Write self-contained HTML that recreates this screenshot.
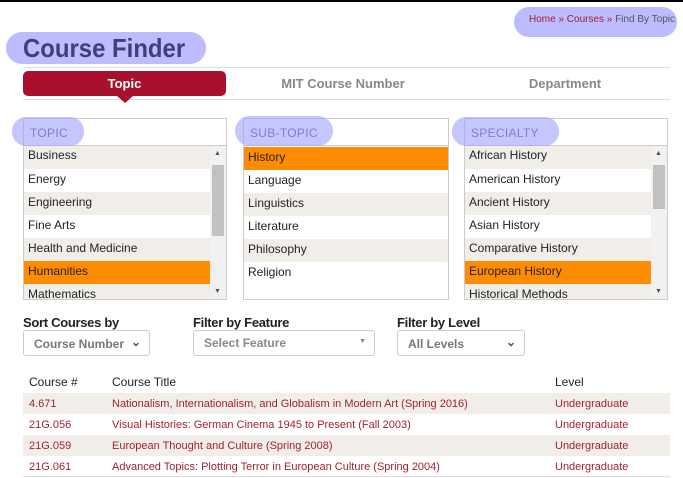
<!DOCTYPE html>
<html><head><style>
*{margin:0;padding:0;box-sizing:border-box}
body{width:683px;height:478px;background:#fff;font-family:"Liberation Sans",sans-serif;position:relative;overflow:hidden}
.a{position:absolute}
.blob{position:absolute;background:rgba(160,160,255,.7);border-radius:16px}
.box{position:absolute;top:118px;height:182px;border:1px solid #ccc;background:#fff;overflow:hidden}
.hd{height:27px;border-bottom:1px solid #ccc;font-size:12px;color:#4a4a8a;padding:7px 0 0 6px;letter-spacing:.3px}
.row{height:23px;font-size:12px;color:#222;padding:3px 0 0 4px}
.g{background:#f1eeea}.o{background:#ff8c00}
.sb{position:absolute;right:0;top:27px;width:16px;bottom:0;background:#f1f1f1}
.th{position:absolute;left:2px;width:12px;background:#c1c1c1}
.lab{position:absolute;top:315px;font-size:13px;color:#222;font-weight:bold;letter-spacing:-.3px}
.sel{position:absolute;top:330px;height:26px;border:1px solid #ccc;border-radius:3px;font-size:12px;color:#777;padding:6px 0 0 10px;font-weight:bold}
.tr{position:absolute;left:23px;width:647px;height:21px;font-size:11px;color:#a31f34}
.tr span{position:absolute;top:5px}
</style></head><body>
<div class="a" style="left:0;top:0;width:683px;height:2px;background:#000"></div>
<div class="blob" style="left:514px;top:7px;width:163px;height:30px;border-radius:15px"></div>
<div class="a" style="left:529px;top:14px;font-size:10px;color:#a31f34">Home » Courses » <span style="color:#555">Find By Topic</span></div>
<div class="blob" style="left:6px;top:32px;width:200px;height:32px"></div>
<div class="a" style="left:23px;top:33px;font-size:26px;font-weight:bold;color:#3f3f7a;transform:scaleX(.92);transform-origin:left top">Course Finder</div>
<div class="a" style="left:23px;top:67px;width:647px;height:1px;background:#ddd"></div>
<div class="a" style="left:23px;top:99px;width:647px;height:1px;background:#ddd"></div>
<div class="a" style="left:23px;top:71px;width:203px;height:25px;background:#a8102e;border-radius:5px;color:#fff;font-weight:bold;font-size:13px;text-align:center;line-height:25px">Topic</div>
<div class="a" style="left:117px;top:96px;border-left:8px solid transparent;border-right:8px solid transparent;border-top:7px solid #a8102e"></div>
<div class="a" style="left:226px;top:76px;width:234px;text-align:center;font-size:13px;font-weight:bold;color:#888">MIT Course Number</div>
<div class="a" style="left:460px;top:76px;width:210px;text-align:center;font-size:13px;font-weight:bold;color:#888">Department</div>

<div class="box" style="left:23px;width:204px">
<div class="hd">TOPIC</div>
<div class="row g" style="padding-top:2px">Business</div><div class="row">Energy</div><div class="row g">Engineering</div><div class="row">Fine Arts</div><div class="row g">Health and Medicine</div><div class="row o">Humanities</div><div class="row g">Mathematics</div>
<div class="sb"><div class="th" style="top:19px;height:71px"></div><div class="a" style="left:4px;top:4px;font-size:7px;color:#555">▲</div><div class="a" style="left:4px;bottom:4px;font-size:7px;color:#555">▼</div></div>
</div>
<div class="box" style="left:243px;width:206px">
<div class="hd">SUB-TOPIC</div>
<div class="row o" style="margin-top:1px">History</div><div class="row">Language</div><div class="row g">Linguistics</div><div class="row">Literature</div><div class="row g">Philosophy</div><div class="row">Religion</div>
</div>
<div class="box" style="left:464px;width:204px">
<div class="hd">SPECIALTY</div>
<div class="row g" style="padding-top:2px">African History</div><div class="row">American History</div><div class="row g">Ancient History</div><div class="row">Asian History</div><div class="row g">Comparative History</div><div class="row o">European History</div><div class="row g">Historical Methods</div>
<div class="sb"><div class="th" style="top:19px;height:44px"></div><div class="a" style="left:4px;top:4px;font-size:7px;color:#555">▲</div><div class="a" style="left:4px;bottom:4px;font-size:7px;color:#555">▼</div></div>
</div>
<div class="blob" style="left:12px;top:117px;width:72px;height:29px;border-radius:14px;opacity:.85"></div>
<div class="blob" style="left:235px;top:116px;width:98px;height:30px;border-radius:15px;opacity:.85"></div>
<div class="blob" style="left:452px;top:117px;width:107px;height:29px;border-radius:14px;opacity:.85"></div>

<div class="lab" style="left:23px">Sort Courses by</div>
<div class="lab" style="left:193px">Filter by Feature</div>
<div class="lab" style="left:397px">Filter by Level</div>
<div class="sel" style="left:23px;width:127px">Course Number<span class="a" style="right:8px;top:4px;color:#555">⌄</span></div>
<div class="sel" style="left:193px;width:182px;padding-top:5px;color:#888">Select Feature<span class="a" style="right:8px;top:7px;font-size:7px">▼</span></div>
<div class="sel" style="left:397px;width:128px">All Levels<span class="a" style="right:8px;top:4px;color:#555">⌄</span></div>

<div class="a" style="left:29px;top:375px;font-size:12px;color:#222">Course #</div>
<div class="a" style="left:112px;top:375px;font-size:12px;color:#222">Course Title</div>
<div class="a" style="left:555px;top:375px;font-size:12px;color:#222">Level</div>
<div class="tr g" style="top:393px"><span style="left:6px">4.671</span><span style="left:89px">Nationalism, Internationalism, and Globalism in Modern Art (Spring 2016)</span><span style="left:532px">Undergraduate</span></div>
<div class="tr" style="top:414px"><span style="left:6px">21G.056</span><span style="left:89px">Visual Histories: German Cinema 1945 to Present (Fall 2003)</span><span style="left:532px">Undergraduate</span></div>
<div class="tr g" style="top:435px"><span style="left:6px">21G.059</span><span style="left:89px">European Thought and Culture (Spring 2008)</span><span style="left:532px">Undergraduate</span></div>
<div class="tr" style="top:456px;border-bottom:1px solid #ddd"><span style="left:6px">21G.061</span><span style="left:89px">Advanced Topics: Plotting Terror in European Culture (Spring 2004)</span><span style="left:532px">Undergraduate</span></div>
</body></html>
